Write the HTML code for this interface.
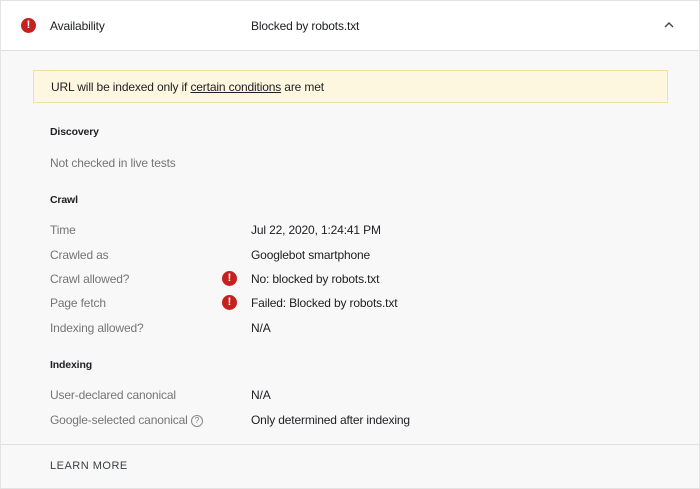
<!DOCTYPE html>
<html><head><style>
body{margin:0;width:700px;height:489px;background:#fff;font-family:"Liberation Sans",Arial,sans-serif;overflow:hidden;position:relative}
.card{position:absolute;left:0;top:0;width:698px;height:487px;background:#f8f8f8;border:1px solid #e3e3e3;box-shadow:0 1px 2px rgba(0,0,0,.2)}
.hdr{position:absolute;left:0;top:0;width:698px;height:49px;background:#fff;border-bottom:1px solid #e0e0e0}
.t{position:absolute;font-size:12px;color:#202124;white-space:nowrap;letter-spacing:-.15px}
.g{color:#757575}
.h{font-size:10.5px;color:#202124;font-weight:600}
.ic{position:absolute;width:15px;height:15px;border-radius:50%;background:#c5221f;color:#fff;font-size:11px;font-weight:bold;text-align:center;line-height:15px}
.warn{position:absolute;left:32px;top:69px;width:633px;height:31px;background:#fef7e0;border:1px solid #f3dfa6}
</style></head><body>
<div class="card">
<div class="hdr">
<div class="ic" style="left:20px;top:17px">!</div>
<div class="t" style="left:49px;top:18px">Availability</div>
<div class="t" style="left:250px;top:18px">Blocked by robots.txt</div>
<svg style="position:absolute;left:663px;top:20px" width="10" height="8" viewBox="0 0 10 8"><path d="M1 6 L5 2 L9 6" stroke="#444" stroke-width="1.4" fill="none"/></svg>
</div>
<div class="warn"><div class="t" style="left:17px;top:9px">URL will be indexed only if <span style="text-decoration:underline">certain conditions</span> are met</div></div>
<div class="t h" style="left:49px;top:125px">Discovery</div>
<div class="t g" style="left:49px;top:155px">Not checked in live tests</div>
<div class="t h" style="left:49px;top:193px">Crawl</div>
<div class="t g" style="left:49px;top:222px">Time</div><div class="t" style="left:250px;top:222px">Jul 22, 2020, 1:24:41 PM</div>
<div class="t g" style="left:49px;top:247px">Crawled as</div><div class="t" style="left:250px;top:247px">Googlebot smartphone</div>
<div class="t g" style="left:49px;top:271px">Crawl allowed?</div><div class="ic" style="left:221px;top:270px">!</div><div class="t" style="left:250px;top:271px">No: blocked by robots.txt</div>
<div class="t g" style="left:49px;top:295px">Page fetch</div><div class="ic" style="left:221px;top:294px">!</div><div class="t" style="left:250px;top:295px">Failed: Blocked by robots.txt</div>
<div class="t g" style="left:49px;top:320px">Indexing allowed?</div><div class="t" style="left:250px;top:320px">N/A</div>
<div class="t h" style="left:49px;top:358px">Indexing</div>
<div class="t g" style="left:49px;top:387px">User-declared canonical</div><div class="t" style="left:250px;top:387px">N/A</div>
<div class="t g" style="left:49px;top:412px">Google-selected canonical <span style="display:inline-block;width:10px;height:10px;border:1px solid #888;border-radius:50%;font-size:8px;line-height:10px;text-align:center;vertical-align:1px">?</span></div><div class="t" style="left:250px;top:412px">Only determined after indexing</div>
<div style="position:absolute;left:0;top:443px;width:698px;border-top:1px solid #e0e0e0"></div>
<div class="t" style="left:49px;top:459px;font-size:11px;color:#3c4043;letter-spacing:.5px">LEARN MORE</div>
</div>
</body></html>
